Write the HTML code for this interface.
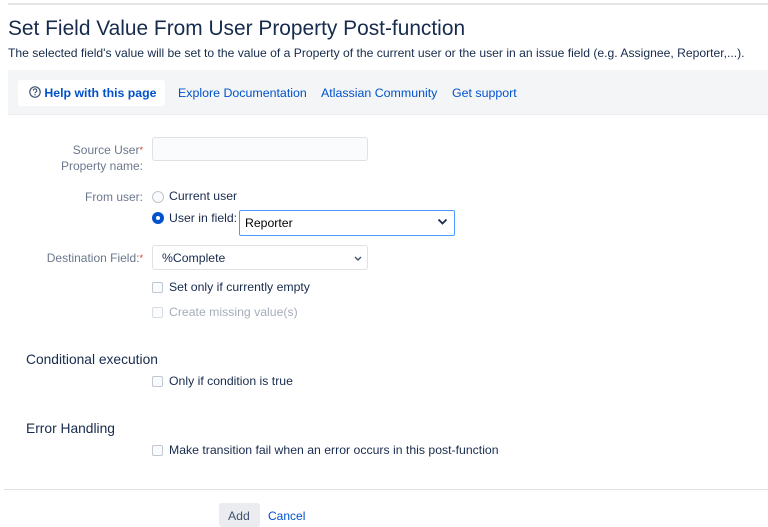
<!DOCTYPE html>
<html><head><meta charset="utf-8">
<style>
*{box-sizing:border-box;margin:0;padding:0}
body{width:768px;height:522px;overflow:hidden;background:#fff;font-family:"Liberation Sans",sans-serif;color:#172b4d;position:relative}
.a{position:absolute;white-space:nowrap}
.lbl{position:absolute;right:625px;text-align:right;font-size:12px;color:#6b778c;line-height:16px}
.req{color:#de350b;font-size:9px;vertical-align:top}
.t{font-size:12.25px;color:#172b4d}
.cb{position:absolute;width:11px;height:11px;border:1px solid #c1c7d0;border-radius:2px;background:#fafbfc}
.link{color:#0052cc;font-size:12.4px}
</style></head><body>
<div class="a" style="left:8px;top:3px;width:760px;height:2px;background:#e4e5e7"></div>
<div class="a" style="left:8px;top:17px;font-size:20.9px;color:#172b4d">Set Field Value From User Property Post-function</div>
<div class="a" style="left:8px;top:46px;font-size:12.15px;color:#172b4d">The selected field's value will be set to the value of a Property of the current user or the user in an issue field (e.g. Assignee, Reporter,...).</div>
<div class="a" style="left:8px;top:70px;width:760px;height:45px;background:#f4f5f7;border-bottom:1px solid #ebecf0"></div>
<div class="a" style="left:18px;top:80px;width:147px;height:26px;background:#fff;border-radius:3px"></div>
<div class="a" style="left:29px;top:86px;font-size:12.3px;font-weight:bold;color:#0052cc">
<svg width="12" height="12" viewBox="0 0 12 12" style="vertical-align:-1px"><circle cx="6" cy="6" r="5.2" fill="none" stroke="#42526e" stroke-width="1.2"/><path d="M4.3 4.6a1.7 1.7 0 1 1 2.4 1.5c-.5.3-.7.6-.7 1.1" fill="none" stroke="#42526e" stroke-width="1.1"/><circle cx="6" cy="8.8" r=".7" fill="#42526e"/></svg> Help with this page</div>
<div class="a link" style="left:178px;top:86px">Explore Documentation</div>
<div class="a link" style="left:321px;top:86px">Atlassian Community</div>
<div class="a link" style="left:452px;top:86px">Get support</div>

<div class="lbl" style="top:142px">Source User<span class="req">*</span><br>Property name:</div>
<div class="a" style="left:152px;top:137px;width:216px;height:24px;border:1px solid #dfe1e6;border-radius:3px;background:#fafbfc"></div>

<div class="lbl" style="top:189px">From user:</div>
<div class="a" style="left:152px;top:191px;width:12px;height:12px;border:1px solid #c1c7d0;border-radius:50%;background:#fafbfc"></div>
<div class="a t" style="left:169px;top:189px">Current user</div>
<div class="a" style="left:152px;top:212px;width:12px;height:12px;border-radius:50%;background:#0052cc"></div>
<div class="a" style="left:156px;top:216px;width:4px;height:4px;border-radius:50%;background:#fff"></div>
<div class="a t" style="left:169px;top:211px">User in field:</div>
<div class="a" style="left:239px;top:210px;width:216px;height:26px;border:1px solid #4c9aff;border-radius:2px;background:#fff"></div>
<div class="a t" style="left:245px;top:216px;color:#000">Reporter</div>
<svg class="a" style="left:437px;top:218px" width="11" height="8" viewBox="0 0 11 8"><path d="M1.5 1.5l4 4 4-4" fill="none" stroke="#172b4d" stroke-width="1.8"/></svg>

<div class="lbl" style="top:250px">Destination Field:<span class="req">*</span></div>
<div class="a" style="left:152px;top:245px;width:216px;height:25px;border:1px solid #dfe1e6;border-radius:3px;background:#fff"></div>
<div class="a t" style="left:162px;top:251px">%Complete</div>
<svg class="a" style="left:354px;top:256px" width="8" height="5" viewBox="0 0 8 5"><path d="M1 1l3 3 3-3" fill="none" stroke="#42526e" stroke-width="1.4"/></svg>

<div class="cb" style="left:152px;top:282px"></div>
<div class="a t" style="left:169px;top:280px">Set only if currently empty</div>
<div class="cb" style="left:152px;top:307px;opacity:.6"></div>
<div class="a t" style="left:169px;top:305px;color:#a5adba">Create missing value(s)</div>

<div class="a" style="left:26px;top:352px;font-size:13.8px;color:#172b4d">Conditional execution</div>
<div class="cb" style="left:152px;top:376px"></div>
<div class="a t" style="left:169px;top:374px">Only if condition is true</div>

<div class="a" style="left:26px;top:421px;font-size:13.8px;color:#172b4d">Error Handling</div>
<div class="cb" style="left:152px;top:445px"></div>
<div class="a t" style="left:169px;top:443px">Make transition fail when an error occurs in this post-function</div>

<div class="a" style="left:4px;top:489px;width:764px;height:1px;background:#dfe1e6"></div>
<div class="a" style="left:219px;top:503px;width:41px;height:24px;background:#ebecf0;border-radius:3px"></div>
<div class="a t" style="left:228px;top:509px;color:#42526e">Add</div>
<div class="a link" style="left:268px;top:509px;font-size:12px">Cancel</div>
</body></html>
